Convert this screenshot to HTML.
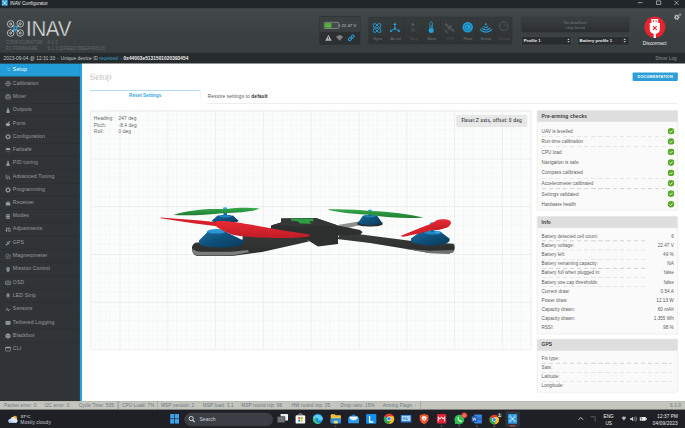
<!DOCTYPE html><html><head><meta charset="utf-8"><title>INAV Configurator</title><style>
*{box-sizing:border-box;margin:0;padding:0}
html,body{width:685px;height:428px;overflow:hidden;background:#fff}
body{font-family:'Liberation Sans',sans-serif;color:#4f4f4f}
#app{position:absolute;left:0;top:0;width:1920px;height:1200px;transform:scale(0.356771);transform-origin:0 0;overflow:hidden;background:#2b3033;font-size:12.5px}
.abs{position:absolute}
#titlebar{z-index:6;left:0;top:0;width:1920px;height:23px;background:#21262a;color:#e8e8e8;font-size:12.5px}
#titlebar .ttl{left:28px;top:1px;line-height:16px;white-space:nowrap;font-size:13.2px}
#header{left:0;top:15px;width:1920px;height:133px;background:linear-gradient(#434949 8px,#3c4243 64px,#383e3f);z-index:5}
#header>.in{position:absolute;left:0;top:8px;width:1920px;height:125px}
#logbar{left:0;top:140px;width:1920px;height:38px;padding-top:0;z-index:4;background:#262b2e;color:#c9c9c9;font-size:13.1px;letter-spacing:.3px;line-height:29px;white-space:nowrap}
#sidebar{z-index:2;left:0;top:170px;width:227px;height:962px;background:#303437}
#strip{z-index:3;left:223.5px;top:170px;width:6.5px;height:962px;background:#27a1db}
.tab{left:0;width:224px;height:37.2px;border-top:1px solid #25292a;box-shadow:inset 0 1px 0 #363a3b;color:#9b9e9e;font-size:14.4px;letter-spacing:.35px;line-height:33.800px;white-space:nowrap}
.tab span{position:absolute;left:36px;top:0}
.tab.active{background:#239dd8;color:#fff;border-top-color:#239dd8;box-shadow:none;line-height:32px}
.tab svg{position:absolute;left:14px;top:10px;width:17px;height:17px}
#content{z-index:1;left:224px;top:170px;width:1696px;height:964px;background:#fff}
#statusbar{z-index:5;left:0;top:1124px;width:1920px;height:24px;background:#c4c6be;color:#687783;font-size:13.2px;letter-spacing:.3px;line-height:23px;white-space:nowrap;border-top:1px solid #a9aba4}
#statusbar div{position:absolute;top:0}
#statusbar i{position:absolute;top:-1px;width:1.700px;height:25px;background:#7c7e79}
#taskbar{z-index:4;left:0;top:1140px;width:1920px;height:60px;background:#1e2025}
.box{background:#fafafa;border:1px solid #d9d9d9;border-radius:4px}
.box .hd{position:absolute;left:0;top:0;right:0;height:32px;background:#dedede;border-bottom:1px solid #d0d0d0;border-radius:3px 3px 0 0;color:#3a3a3a;font-weight:bold;font-size:13.8px;letter-spacing:.25px;line-height:31px;padding-left:12px}
.row{position:absolute;left:12px;right:10px;color:#5a5a5a;font-size:13px;letter-spacing:.05px;white-space:nowrap}
.row b{position:absolute;right:0;top:0;font-weight:normal}
.dash{position:absolute;left:12px;right:32px;height:1.4px;background:repeating-linear-gradient(90deg,#c3c3c3 0,#c3c3c3 12px,transparent 12px,transparent 19.900px)}
</style></head><body><div id="app">
<div id="titlebar" class="abs">
<svg class="abs" style="left:3.5px;top:-.5px" width="18" height="16.500" viewBox="0 0 18 16.500"><rect width="18" height="16.500" rx="1" fill="#2a9bd8"/><path d="M4.500 3.500l9 9M13.500 3.500l-9 9" stroke="#bfe2f5" stroke-width="1.500"/><circle cx="4.500" cy="3.800" r="2" fill="none" stroke="#d5ecf8" stroke-width="1"/><circle cx="13.500" cy="3.800" r="2" fill="none" stroke="#d5ecf8" stroke-width="1"/><circle cx="4.500" cy="12.500" r="2" fill="none" stroke="#d5ecf8" stroke-width="1"/><circle cx="13.500" cy="12.500" r="2" fill="none" stroke="#d5ecf8" stroke-width="1"/><circle cx="9" cy="8" r="2.200" fill="#eaf6fc"/></svg>
<div class="abs ttl">INAV Configurator</div>
<svg class="abs" style="left:1780px;top:0" width="140" height="23" viewBox="0 0 140 23"><path d="M8 7.5h13" stroke="#eee" stroke-width="1.6"/><path d="M60 2.5h12v10h-12z" fill="none" stroke="#eee" stroke-width="1.6"/><path d="M110 2l12 12M122 2l-12 12" stroke="#eee" stroke-width="1.6"/></svg>
</div>
<div id="header" class="abs"><div class="in">
<div class="abs" style="left:73px;top:25px;font-size:60.5px;line-height:62px;color:#e6e8e8;letter-spacing:-1px;-webkit-text-stroke:1.3px #3d4142;transform:scaleX(.95);transform-origin:0 0">INAV</div>
<div class="abs" style="left:16px;top:86.3px;font-size:12.5px;line-height:18px;color:#63686a;white-space:nowrap;letter-spacing:.2px">CONFIGURATOR<br>FC FIRMWARE</div>
<div class="abs" style="left:133px;top:86.3px;font-size:12.5px;line-height:18px;color:#63686a;white-space:nowrap;letter-spacing:.2px">6.1.0<br>6.1.1 [SPEEDYBEEF405V3]</div>
<div class="abs" style="left:895px;top:22.700px;width:115px;height:80px;background:#2c3031;border:1px solid #282b2c;border-radius:5px;box-shadow:0 1px 0 #4a4e4f"></div>
<div class="abs" style="left:896px;top:23.700px;width:113px;height:43.500px;background:#3a3f40;border-radius:4px 4px 0 0;border-bottom:1px solid #2a2d2e"></div>
<div class="abs" style="left:957px;top:40.500px;font-size:12px;color:#cfcfcf;white-space:nowrap;line-height:14px">22.47 V</div>
<div class="abs" style="left:1031.5px;top:23.700px;width:404.500px;height:78.500px;background:linear-gradient(#353a3b,#2e3233);border:1px solid #282b2c;border-radius:5px;box-shadow:0 1px 0 #4a4e4f"></div>
<div class="abs" style="left:1033.0px;top:77px;width:50.6px;text-align:center;font-size:11.5px;line-height:14px;color:#747979">Gyro</div>
<div class="abs" style="left:1083.6px;top:24.700px;width:1px;height:76.500px;background:#292c2d;box-shadow:1px 0 0 #3d4142"></div>
<div class="abs" style="left:1083.6px;top:77px;width:50.6px;text-align:center;font-size:11.5px;line-height:14px;color:#747979">Accel</div>
<div class="abs" style="left:1134.2px;top:24.700px;width:1px;height:76.500px;background:#292c2d;box-shadow:1px 0 0 #3d4142"></div>
<div class="abs" style="left:1134.2px;top:77px;width:50.6px;text-align:center;font-size:11.5px;line-height:14px;color:#4f5354">Mag</div>
<div class="abs" style="left:1184.8px;top:24.700px;width:1px;height:76.500px;background:#292c2d;box-shadow:1px 0 0 #3d4142"></div>
<div class="abs" style="left:1184.8px;top:77px;width:50.6px;text-align:center;font-size:11.5px;line-height:14px;color:#747979">Baro</div>
<div class="abs" style="left:1235.4px;top:24.700px;width:1px;height:76.500px;background:#292c2d;box-shadow:1px 0 0 #3d4142"></div>
<div class="abs" style="left:1235.4px;top:77px;width:50.6px;text-align:center;font-size:11.5px;line-height:14px;color:#4f5354">GPS</div>
<div class="abs" style="left:1286.0px;top:24.700px;width:1px;height:76.500px;background:#292c2d;box-shadow:1px 0 0 #3d4142"></div>
<div class="abs" style="left:1286.0px;top:77px;width:50.6px;text-align:center;font-size:11.5px;line-height:14px;color:#747979">Flow</div>
<div class="abs" style="left:1336.6px;top:24.700px;width:1px;height:76.500px;background:#292c2d;box-shadow:1px 0 0 #3d4142"></div>
<div class="abs" style="left:1336.6px;top:77px;width:50.6px;text-align:center;font-size:11.5px;line-height:14px;color:#747979">Sonar</div>
<div class="abs" style="left:1387.2px;top:24.700px;width:1px;height:76.500px;background:#292c2d;box-shadow:1px 0 0 #3d4142"></div>
<div class="abs" style="left:1387.2px;top:77px;width:50.6px;text-align:center;font-size:11.5px;line-height:14px;color:#4f5354">Speed</div>
<div class="abs" style="left:1461px;top:25px;width:303px;height:43px;background:linear-gradient(#3a3f40,#2b2f30);border:1px solid #262929;border-radius:4px;box-shadow:0 1px 0 #4a4e4f;color:#777b7c;font-size:11.5px;line-height:14px;text-align:center;padding-top:7px">No dataflash<br>chip found</div>
<div class="abs" style="left:1461.0px;top:78.5px;width:141px;height:25px;background:#2a2d2e;border:1px solid #5b5f60;border-radius:2px;color:#f0f0f0;font-weight:bold;font-size:12px;line-height:23px;padding-left:6px;white-space:nowrap">Profile 1</div>
<div class="abs" style="left:1617.5px;top:78.5px;width:146px;height:25px;background:#2a2d2e;border:1px solid #5b5f60;border-radius:2px;color:#f0f0f0;font-weight:bold;font-size:12px;line-height:23px;padding-left:6px;white-space:nowrap">Battery profile 1</div>
<div class="abs" style="left:1805.5px;top:23.3px;width:59.6px;height:59.6px;border-radius:50%;background:#e8222e"></div>
<div class="abs" style="left:1785px;top:91px;width:100px;text-align:center;color:#f2f2f2;font-size:13.2px;letter-spacing:.2px;line-height:16px">Disconnect</div>
</div></div>
<div id="logbar" class="abs"><span class="abs" style="left:10px;top:8px">2023-09-04 @ 12:31:33 <span style="color:#6a6e70">&ndash;</span> Unique device ID <span style="color:#37a8db">received</span> <span style="color:#6a6e70">&ndash;</span> <b style="color:#f2f2f2">0x44003e5131501020393454</b></span><span class="abs" style="right:23px;top:8px;color:#8e9293">Show Log</span></div>
<div id="sidebar" class="abs">
<div class="abs tab active" style="top:8.0px"><svg viewBox="0 0 15 15" fill="currentColor" stroke="none"><path d="M5 2.200h8v1.300H5zM7 6.800h6v1.300H7z" opacity=".6"/></svg><span>Setup</span></div>
<div class="abs tab" style="top:45.2px"><svg viewBox="0 0 15 15" fill="currentColor" stroke="none"><circle cx="7.500" cy="7.500" r="5.600" fill="none" stroke="currentColor" stroke-width="1.500"/><path d="M7.500 1v13M1 7.500h13" stroke="currentColor" stroke-width="1.300"/></svg><span>Calibration</span></div>
<div class="abs tab" style="top:82.4px"><svg viewBox="0 0 15 15" fill="currentColor" stroke="none"><rect x="2" y="3" width="11" height="10" rx="1.500" fill="none" stroke="currentColor" stroke-width="1.600"/><path d="M4 1.500h7v2H4zM2 7.500h11v1.400H2z"/></svg><span>Mixer</span></div>
<div class="abs tab" style="top:119.6px"><svg viewBox="0 0 15 15" fill="currentColor" stroke="none"><path d="M6 1h3v4l2 2v7H4V7l2-2z"/></svg><span>Outputs</span></div>
<div class="abs tab" style="top:156.8px"><svg viewBox="0 0 15 15" fill="currentColor" stroke="none"><path d="M2 9l3-4 2 1.500 3-5 2 1-2 5 3 1.500-2 4.500H3z"/></svg><span>Ports</span></div>
<div class="abs tab" style="top:194.0px"><svg viewBox="0 0 15 15" fill="currentColor" stroke="none"><circle cx="7.500" cy="7.500" r="4.300" fill="none" stroke="currentColor" stroke-width="2.600"/><circle cx="7.500" cy="7.500" r="6.200" fill="none" stroke="currentColor" stroke-width="1.800" stroke-dasharray="2.300 2.570"/></svg><span>Configuration</span></div>
<div class="abs tab" style="top:231.2px"><svg viewBox="0 0 15 15" fill="currentColor" stroke="none"><path d="M1.500 7.500a6 5.500 0 0 1 12 0z"/><path d="M2 7.500l5.500 6 5.500-6" fill="none" stroke="currentColor" stroke-width="1.100"/></svg><span>Failsafe</span></div>
<div class="abs tab" style="top:268.4px"><svg viewBox="0 0 15 15" fill="currentColor" stroke="none"><path d="M6 1.500h3v5l4 7H2l4-7z"/></svg><span>PID tuning</span></div>
<div class="abs tab" style="top:305.6px"><svg viewBox="0 0 15 15" fill="currentColor" stroke="none"><path d="M2 2h1.600v11H2zM6 5h4v1.500H6zM6 8.500h1.600V14H6zM10.500 7h1.600v7h-1.600zM9 10.500h4.500V12H9z"/></svg><span>Advanced Tuning</span></div>
<div class="abs tab" style="top:342.8px"><svg viewBox="0 0 15 15" fill="currentColor" stroke="none"><circle cx="7.500" cy="7.500" r="4.300" fill="none" stroke="currentColor" stroke-width="2.600"/><circle cx="7.500" cy="7.500" r="6.200" fill="none" stroke="currentColor" stroke-width="1.800" stroke-dasharray="2.300 2.570"/></svg><span>Programming</span></div>
<div class="abs tab" style="top:380.0px"><svg viewBox="0 0 15 15" fill="currentColor" stroke="none"><path d="M2 6h11v7.500H2zM5 3.500h5V6H8.800V4.700H6.200V6H5z"/></svg><span>Receiver</span></div>
<div class="abs tab" style="top:417.2px"><svg viewBox="0 0 15 15" fill="currentColor" stroke="none"><path d="M3 2h9v3H3zM3 6h9v3H3zM3 10h9v3.500H3z"/><path d="M1.500 4l3 3-3 3z" opacity=".7"/></svg><span>Modes</span></div>
<div class="abs tab" style="top:454.4px"><svg viewBox="0 0 15 15" fill="currentColor" stroke="none"><path d="M2.500 1.500h1.500v12H2.500zM7 1.500h1.500v12H7zM11.500 1.500H13v12h-1.500zM1.500 8.500H5v2.500H1.500zM6 3.500h3.500V6H6zM10.500 9H14v2.500h-3.500z"/></svg><span>Adjustments</span></div>
<div class="abs tab" style="top:491.6px"><svg viewBox="0 0 15 15" fill="currentColor" stroke="none"><g transform="rotate(-45 7.500 7.500)"><rect x="5.800" y="4.500" width="3.400" height="6"/><rect x=".5" y="6" width="4.500" height="3"/><rect x="10" y="6" width="4.500" height="3"/></g><path d="M2 11a4 4 0 0 0 3.500 3" fill="none" stroke="currentColor" stroke-width="1.200"/></svg><span>GPS</span></div>
<div class="abs tab" style="top:528.8px"><svg viewBox="0 0 15 15" fill="currentColor" stroke="none"><circle cx="7.500" cy="7.500" r="5.800" fill="none" stroke="currentColor" stroke-width="1.300"/><path d="M9.800 4.500l-1.300 4-3.300 2 1.300-4z"/></svg><span>Magnetometer</span></div>
<div class="abs tab" style="top:566.0px"><svg viewBox="0 0 15 15" fill="currentColor" stroke="none"><path d="M7.500 14.500C5 11 3 8.700 3 6a4.500 4.500 0 0 1 9 0c0 2.700-2 5-4.500 8.500z"/><circle cx="7.500" cy="6" r="1.700" fill="#2f3334"/></svg><span>Mission Control</span></div>
<div class="abs tab" style="top:603.2px"><svg viewBox="0 0 15 15" fill="currentColor" stroke="none"><rect x="1.500" y="3.500" width="12" height="8.500" rx="1" fill="none" stroke="currentColor" stroke-width="1.600"/><path d="M4 6h1.600v3.500H4zM6.700 6h1.600v3.500H6.700zM9.400 6H11v3.500H9.400z"/></svg><span>OSD</span></div>
<div class="abs tab" style="top:640.4px"><svg viewBox="0 0 15 15" fill="currentColor" stroke="none"><path d="M5 1.500h5l1 4.500H4zM3 6.500h9V9H3zM6.800 9h1.400v5H6.800z"/></svg><span>LED Strip</span></div>
<div class="abs tab" style="top:677.6px"><svg viewBox="0 0 15 15" fill="currentColor" stroke="none"><path d="M1 8.500h3.500l1.500-5 2 8.500 1.500-4.500h4" fill="none" stroke="currentColor" stroke-width="1.300"/></svg><span>Sensors</span></div>
<div class="abs tab" style="top:714.8px"><svg viewBox="0 0 15 15" fill="currentColor" stroke="none"><rect x="1.500" y="3.500" width="12" height="9" rx="1"/><path d="M3 5.500h9v1H3z" fill="#2f3334"/></svg><span>Tethered Logging</span></div>
<div class="abs tab" style="top:752.0px"><svg viewBox="0 0 15 15" fill="currentColor" stroke="none"><path d="M7.500 1L13.500 4v7l-6 3.500-6-3.500V4z"/><path d="M7.500 7.500V14M2 4.300l5.500 3.200L13 4.300" stroke="#2f3334" stroke-width=".9" fill="none"/></svg><span>Blackbox</span></div>
<div class="abs tab" style="top:789.2px"><svg viewBox="0 0 15 15" fill="currentColor" stroke="none"><rect x="1.500" y="2.500" width="12" height="10" rx="1" fill="none" stroke="currentColor" stroke-width="1.500"/><path d="M1.500 2.500h12v2.600h-12z"/></svg><span>CLI</span></div>
</div><div id="strip" class="abs"></div>
<div id="content" class="abs">
<div class="abs" style="left:27px;top:30px;font-size:23.5px;line-height:30px;color:#8c8c8c;-webkit-text-stroke:.9px #fff">Setup</div>
<div class="abs" style="left:1549px;top:32.5px;width:127px;height:24px;background:#2e9fd6;border-radius:3px;color:#fff;font-weight:bold;font-size:10.6px;line-height:24px;text-align:center;letter-spacing:.5px">DOCUMENTATION</div>
<div class="abs" style="left:27.5px;top:83px;width:311px;height:28px;border:1px solid rgba(55,168,219,.2);border-top:2px solid #45aee0;border-radius:4px;color:#37a8db;font-weight:bold;font-size:13px;line-height:25px;text-align:center">Reset Settings</div>
<div class="abs" style="left:358px;top:92px;font-size:13.4px;letter-spacing:.35px;line-height:16px;color:#555;white-space:nowrap">Restore settings to <b style="color:#333">default</b></div>
<div class="abs" style="left:356px;top:119px;width:1320px;height:1px;background:#cfcfcf"></div>
<div class="abs" style="left:29px;top:139px;width:1237px;height:672px;border:1px solid #dcdcdc;border-radius:4px;background-color:#fbfcfc"></div>
<div class="abs" style="left:39px;top:154px;font-size:13.4px;letter-spacing:.3px;line-height:18.6px;color:#4a4a4a;white-space:nowrap">Heading:<br>Pitch:<br>Roll:</div>
<div class="abs" style="left:108px;top:154px;font-size:13.4px;letter-spacing:.3px;line-height:18.6px;color:#4a4a4a;white-space:nowrap">247 deg<br>-8.4 deg<br>0 deg</div>
<div class="abs" style="left:1055.5px;top:152.5px;width:197px;height:32px;background:#e6e6e6;border:1px solid #c8c8c8;border-radius:3px;color:#262626;font-weight:bold;font-size:13.3px;letter-spacing:.2px;line-height:30px;text-align:center;white-space:nowrap">Reset Z axis, offset: 0 deg</div>
<div class="abs box" style="left:1281px;top:139.0px;width:394.5px;height:281.0px"><div class="hd">Pre-arming checks</div>
<div class="row" style="top:50.0px;line-height:16px">UAV is levelled</div>
<svg class="abs" style="right:8.5px;top:47.6px" width="19.5" height="19.5" viewBox="0 0 18 18"><circle cx="9" cy="9" r="8.6" fill="#59aa29"/><path d="M5 9.3l2.8 2.8 5.2-5.4" fill="none" stroke="#fff" stroke-width="2.2"/></svg>
<div class="dash" style="top:71.8px;right:32px"></div>
<div class="row" style="top:79.3px;line-height:16px">Run-time calibration</div>
<svg class="abs" style="right:8.5px;top:76.9px" width="19.5" height="19.5" viewBox="0 0 18 18"><circle cx="9" cy="9" r="8.6" fill="#59aa29"/><path d="M5 9.3l2.8 2.8 5.2-5.4" fill="none" stroke="#fff" stroke-width="2.2"/></svg>
<div class="dash" style="top:101.1px;right:32px"></div>
<div class="row" style="top:108.6px;line-height:16px">CPU load</div>
<svg class="abs" style="right:8.5px;top:106.2px" width="19.5" height="19.5" viewBox="0 0 18 18"><circle cx="9" cy="9" r="8.6" fill="#59aa29"/><path d="M5 9.3l2.8 2.8 5.2-5.4" fill="none" stroke="#fff" stroke-width="2.2"/></svg>
<div class="row" style="top:137.9px;line-height:16px">Navigation is safe</div>
<svg class="abs" style="right:8.5px;top:135.5px" width="19.5" height="19.5" viewBox="0 0 18 18"><circle cx="9" cy="9" r="8.6" fill="#59aa29"/><path d="M5 9.3l2.8 2.8 5.2-5.4" fill="none" stroke="#fff" stroke-width="2.2"/></svg>
<div class="row" style="top:167.2px;line-height:16px">Compass calibrated</div>
<svg class="abs" style="right:8.5px;top:164.8px" width="19.5" height="19.5" viewBox="0 0 18 18"><circle cx="9" cy="9" r="8.6" fill="#59aa29"/><path d="M5 9.3l2.8 2.8 5.2-5.4" fill="none" stroke="#fff" stroke-width="2.2"/></svg>
<div class="dash" style="top:189.0px;right:32px"></div>
<div class="row" style="top:196.5px;line-height:16px">Accelerometer calibrated</div>
<svg class="abs" style="right:8.5px;top:194.1px" width="19.5" height="19.5" viewBox="0 0 18 18"><circle cx="9" cy="9" r="8.6" fill="#59aa29"/><path d="M5 9.3l2.8 2.8 5.2-5.4" fill="none" stroke="#fff" stroke-width="2.2"/></svg>
<div class="dash" style="top:218.3px;right:32px"></div>
<div class="row" style="top:225.8px;line-height:16px">Settings validated</div>
<svg class="abs" style="right:8.5px;top:223.4px" width="19.5" height="19.5" viewBox="0 0 18 18"><circle cx="9" cy="9" r="8.6" fill="#59aa29"/><path d="M5 9.3l2.8 2.8 5.2-5.4" fill="none" stroke="#fff" stroke-width="2.2"/></svg>
<div class="row" style="top:255.1px;line-height:16px">Hardware health</div>
<svg class="abs" style="right:8.5px;top:252.7px" width="19.5" height="19.5" viewBox="0 0 18 18"><circle cx="9" cy="9" r="8.6" fill="#59aa29"/><path d="M5 9.3l2.8 2.8 5.2-5.4" fill="none" stroke="#fff" stroke-width="2.2"/></svg>
</div>
<div class="abs box" style="left:1281px;top:436.0px;width:394.5px;height:330.7px"><div class="hd">Info</div>
<div class="row" style="top:47.4px;line-height:16px">Battery detected cell count:<b>6</b></div>
<div class="dash" style="top:67.3px;right:86px"></div>
<div class="row" style="top:73.0px;line-height:16px">Battery voltage:<b>22.47 V</b></div>
<div class="dash" style="top:93.0px;right:86px"></div>
<div class="row" style="top:98.7px;line-height:16px">Battery left:<b>49 %</b></div>
<div class="dash" style="top:118.6px;right:86px"></div>
<div class="row" style="top:124.4px;line-height:16px">Battery remaining capacity:<b>NA</b></div>
<div class="dash" style="top:144.3px;right:86px"></div>
<div class="row" style="top:150.0px;line-height:16px">Battery full when plugged in:<b>false</b></div>
<div class="dash" style="top:169.9px;right:86px"></div>
<div class="row" style="top:175.7px;line-height:16px">Battery use cap thresholds:<b>false</b></div>
<div class="dash" style="top:195.6px;right:86px"></div>
<div class="row" style="top:201.3px;line-height:16px">Current draw:<b>0.54 A</b></div>
<div class="row" style="top:226.9px;line-height:16px">Power draw:<b>12.13 W</b></div>
<div class="row" style="top:252.6px;line-height:16px">Capacity drawn:<b>60 mAh</b></div>
<div class="row" style="top:278.2px;line-height:16px">Capacity drawn:<b>1.355 Wh</b></div>
<div class="row" style="top:303.9px;line-height:16px">RSSI:<b>98 %</b></div>
</div>
<div class="abs box" style="left:1281px;top:780.0px;width:394.5px;height:150.0px"><div class="hd">GPS</div>
<div class="row" style="top:46.7px;line-height:16px">Fix type:</div>
<div class="dash" style="top:66.4px;right:17px"></div>
<div class="row" style="top:71.9px;line-height:16px">Sats:</div>
<div class="dash" style="top:91.6px;right:17px"></div>
<div class="row" style="top:97.1px;line-height:16px">Latitude:</div>
<div class="dash" style="top:116.8px;right:17px"></div>
<div class="row" style="top:122.3px;line-height:16px">Longitude:</div>
</div>
</div>
<div id="statusbar" class="abs">
<div style="left:11.5px">Packet error: 0</div>
<div style="left:124.7px">I2C error: 0</div>
<div style="left:220.6px">Cycle Time: 505</div>
<div style="left:342.0px">CPU Load: 7%</div>
<div style="left:451.3px">MSP version: 2</div>
<div style="left:568.4px">MSP load: 3.1</div>
<div style="left:676.1px">MSP round trip: 96</div>
<div style="left:817.1px">HW round trip: 35</div>
<div style="left:954.4px">Drop ratio: 15%</div>
<div style="left:1072.7px">Arming Flags: -</div>
<i style="left:330.2px"></i>
<i style="left:440.6px"></i>
<i style="left:1178.6px"></i>
<div style="right:11px">6.1.0</div>
</div>
<div id="taskbar" class="abs">
<div class="abs" style="left:57.500px;top:21px;color:#fff;font-size:12.300px;letter-spacing:0;line-height:14px;white-space:nowrap">37°C</div><div class="abs" style="left:57px;top:38px;color:#c9cdd2;font-size:13.5px;letter-spacing:.3px;line-height:14px;white-space:nowrap">Mostly cloudy</div>
<div class="abs" style="left:517px;top:16.500px;width:248px;height:37px;border-radius:19px;background:#3b3f45;border:1px solid #484c52"></div>
<div class="abs" style="left:559px;top:28px;color:#d4d6d9;font-size:14px;letter-spacing:.2px;line-height:15px">Search</div>
<div class="abs" style="left:1686px;top:19px;width:40px;text-align:center;color:#f2f2f2;font-size:13px;line-height:17.5px">ENG<br>US</div>
<div class="abs" style="right:20px;top:19px;text-align:right;color:#f2f2f2;font-size:13px;letter-spacing:.25px;line-height:17.5px;white-space:nowrap">12:37 PM</div>
<div class="abs" style="right:20px;top:36.5px;text-align:right;color:#f2f2f2;font-size:13px;letter-spacing:.55px;line-height:17.5px;white-space:nowrap">04/09/2023</div>
</div>
<svg class="abs" style="left:0;top:0;z-index:9" width="1920" height="1200" viewBox="0 0 685 428.125">
<!-- logo drone -->
<g fill="none" stroke="#d4d8d8" stroke-width="0.75">
<path d="M12.2 25.5L18.8 31.5M18.8 25.5L12.2 31.5" stroke-width="1.1"/>
<circle cx="10.7" cy="24" r="3.3"/><circle cx="20.2" cy="23.8" r="3.3"/><circle cx="10.7" cy="33" r="3.3"/><circle cx="20.2" cy="33" r="3.3"/>
<circle cx="10.7" cy="24" r="1"/><circle cx="20.2" cy="23.8" r="1"/><circle cx="10.7" cy="33" r="1"/><circle cx="20.2" cy="33" r="1"/>
</g>
<path d="M15.45 32.2C14 30.2 13 29.2 13 27.9a2.45 2.45 0 0 1 4.9 0c0 1.3-1 2.3-2.45 4.3z" fill="#2fa3dc" stroke="#3d4142" stroke-width=".5"/>
<circle cx="15.45" cy="27.9" r="0.9" fill="#3d4142"/>

<!-- battery icon -->
<rect x="324.300" y="22.300" width="14.500" height="6.200" rx="0.800" fill="#464a4b" stroke="#979b9b" stroke-width="0.700"/>
<rect x="325.100" y="23.100" width="6.300" height="4.600" fill="#52b53a"/>
<rect x="339.200" y="24.100" width="0.800" height="2.600" fill="#979b9b"/>
<!-- status icons -->
<path d="M328.500 34.800l3.200 6h-6.400z" fill="#b4b7b7"/>
<path d="M328.500 36.800v2M328.500 39.500v.600" stroke="#303435" stroke-width=".7"/>
<path d="M336.100 36.800c2-2.200 5.100-2.200 7.100 0l-3.550 4z" fill="#7d8182"/>
<g fill="none" stroke="#2b9fd9" stroke-width="1"><rect x="348.2" y="37.9" width="3.6" height="2.3" rx="1.1" transform="rotate(-45 350 39)"/><rect x="350.7" y="35.5" width="3.6" height="2.3" rx="1.1" transform="rotate(-45 352.5 36.6)"/></g>

<!-- sensors -->
<g fill="none" stroke="#25a2dc" stroke-width="0.85">
<ellipse cx="377.1" cy="28" rx="5.400" ry="2.100" transform="rotate(52 377.100 28)"/><ellipse cx="377.100" cy="28" rx="5.400" ry="2.100" transform="rotate(-52 377.100 28)"/>
</g>
<circle cx="377.100" cy="28" r=".9" fill="#25a2dc"/>
<g stroke="#25a2dc" stroke-width="0.9" fill="#25a2dc">
<path d="M394.900 24.500v4.100l-3.800 2.300M394.900 28.600l3.800 2.300" fill="none"/>
<path d="M394.900 22.500l1.700 2.500h-3.400z" stroke="none"/>
<path d="M389.700 31.800l1-2.700 1.600 2.600z" stroke="none"/><path d="M400.100 31.800l-1-2.700-1.600 2.600z" stroke="none"/>
<circle cx="394.900" cy="28.600" r="1.100" stroke="none"/>
</g>
<path d="M412.900 22.400l1.800 3h-3.600z" fill="#5a5e5f"/>
<text x="412.900" y="32.400" font-family="'Liberation Sans',sans-serif" font-size="5.800" text-anchor="middle" fill="#5a5e5f">N</text>
<rect x="429.900" y="22" width="2.600" height="8" rx="1.300" fill="#343839" stroke="#25a2dc" stroke-width=".7"/><circle cx="431.200" cy="30.500" r="2.500" fill="#25a2dc"/>
<path d="M431.200 25v5" stroke="#25a2dc" stroke-width=".8"/>
<g fill="#505455" transform="rotate(40 449.600 27.500)"><rect x="448.100" y="25.300" width="3" height="4.400"/><rect x="443.400" y="26.400" width="4.200" height="2.200"/><rect x="451.600" y="26.400" width="4.200" height="2.200"/></g>
<path d="M444.800 29.600a3.800 3.800 0 0 0 3.800 3.400" fill="none" stroke="#505455" stroke-width=".8"/><circle cx="446.800" cy="31.200" r=".8" fill="#505455"/>
<circle cx="467.700" cy="27.300" r="5.200" fill="#1f9fd9"/><circle cx="467.700" cy="27.300" r="3.300" fill="none" stroke="#1670a0" stroke-width=".9"/><circle cx="467.700" cy="27.300" r="1.300" fill="#1670a0"/><circle cx="468.300" cy="26.800" r=".6" fill="#9fd8f2"/>
<g fill="none" stroke="#25a2dc" stroke-width="1.050"><path d="M483.600 26.400a3 3 0 0 0 4.600 0"/><path d="M481.700 27.900a5.400 5.400 0 0 0 8.400 0"/><path d="M479.900 29.300a7.800 7.800 0 0 0 12 0"/></g>
<circle cx="485.900" cy="24.300" r="1" fill="#25a2dc"/>
<circle cx="503.700" cy="26.300" r="4.300" fill="none" stroke="#505455" stroke-width="1"/><path d="M503.700 26.600l2.200-2.600" stroke="#505455" stroke-width=".9"/>

<!-- select arrows -->
<g fill="#c9cccc"><path d="M567.3 39.9l1.2-1.5 1.2 1.5zM567.3 41.1l1.2 1.5 1.2-1.5z"/><path d="M623.5 39.9l1.2-1.5 1.2 1.5zM623.5 41.1l1.2 1.5 1.2-1.5z"/></g>

<!-- usb / disconnect -->
<g transform="translate(.4 .9)"><g fill="#fff"><rect x="651" y="18.2" width="6.8" height="4.2" rx=".5"/><path d="M649.3 22.2h10.2v6.2c0 2.6-2 4.3-4 4.6v4.2h-2.2V33c-2-.3-4-2-4-4.6z"/></g>
<rect x="652.4" y="19.4" width="1.3" height="1.4" fill="#e8222e"/><rect x="655.1" y="19.4" width="1.3" height="1.4" fill="#e8222e"/>
<path d="M652.5 25.2l3.8 3.8M656.3 25.2l-3.8 3.8" stroke="#e8222e" stroke-width="1.1"/></g>
<!-- gear -->
<circle cx="676.8" cy="17.2" r="1.9" fill="none" stroke="#cfd2d2" stroke-width="1.3" stroke-dasharray="1 .5"/><circle cx="676.8" cy="17.2" r="1.5" fill="none" stroke="#cfd2d2" stroke-width=".8"/>
<circle cx="680" cy="14.6" r=".9" fill="none" stroke="#cfd2d2" stroke-width=".5"/>
<!-- ================= grid ================= -->
<defs>
<pattern id="grid" x="119.5" y="110.6" width="47.8" height="47.8" patternUnits="userSpaceOnUse">
<path d="M4.78 0V47.8M14.34 0V47.8M23.9 0V47.8M33.46 0V47.8M43.02 0V47.8M0 4.78H47.8M0 14.34H47.8M0 23.9H47.8M0 33.46H47.8M0 43.02H47.8" stroke="#f3f5f5" stroke-width=".3" fill="none"/>
<path d="M9.56 0V47.8M19.12 0V47.8M28.68 0V47.8M38.24 0V47.8M0 9.56H47.8M0 19.12H47.8M0 28.68H47.8M0 38.24H47.8" stroke="#ecefef" stroke-width=".45" fill="none"/>
<path d="M0 0V47.8M0 0H47.8" stroke="#d7dcdc" stroke-width=".8" fill="none"/>
</pattern>
</defs>
<rect x="90.700" y="110.700" width="440.400" height="238.900" fill="url(#grid)"/>
<!-- ================= drone ================= -->
<defs>
<linearGradient id="mtr" x1="0" y1="0" x2="1" y2="1"><stop offset="0" stop-color="#1a6fa2"/><stop offset=".5" stop-color="#0e507a"/><stop offset="1" stop-color="#093a5a"/></linearGradient>
<linearGradient id="redb" x1="0" y1="0" x2="0" y2="1"><stop offset="0" stop-color="#ea2a33"/><stop offset="1" stop-color="#c01c26"/></linearGradient>
<linearGradient id="grn" x1="0" y1="0" x2="0" y2="1"><stop offset="0" stop-color="#35a84a"/><stop offset="1" stop-color="#1f7f33"/></linearGradient>
<linearGradient id="arm" x1="0" y1="0" x2="0" y2="1"><stop offset="0" stop-color="#3b3d3d"/><stop offset="1" stop-color="#2a2c2c"/></linearGradient>
</defs>
<!-- back arms -->
<path d="M338 225L360 221.3 363 224.2 344 229z" fill="#8d8f8f"/>
<!-- back-left motor -->
<path d="M216.5 216.5c0-2 17.5-2 17.5 0l4.6 4.2c0 3.2-26.8 3.2-26.8 0z" fill="url(#mtr)"/>
<ellipse cx="225.2" cy="216.3" rx="6" ry="1.3" fill="#2183bd"/>
<rect x="223.4" y="208" width="3.6" height="7" fill="#1466a0"/><ellipse cx="225.2" cy="208.3" rx="2.2" ry="1" fill="#39a9e6"/>
<!-- back-right motor -->
<path d="M357.5 224.2c0 3 25 3 25 0v-1.600c0-1-25-1-25 0z" fill="#2b2d2d"/><path d="M362.5 216.3c0-1.8 15-1.8 15 0l4.3 6c0 3.6-23.4 3.6-23.4 0z" fill="url(#mtr)"/>
<ellipse cx="370" cy="216" rx="5.2" ry="1.2" fill="#2183bd"/>
<rect x="368.4" y="210.2" width="3.2" height="5.8" fill="#1466a0"/><ellipse cx="370" cy="210.4" rx="2" ry=".9" fill="#39a9e6"/>
<!-- green props -->
<path d="M173.4 214.9C188 209.8 210 208.3 225 209.2 240 207.2 252 207.4 259.8 208.8 251 211.8 238 212.8 225 212.9 205 215 188 216 173.4 214.9z" fill="url(#grn)"/>
<path d="M328.5 209.3C345 208.8 358 209.8 370 210.9 390 211.4 410 214.4 423.8 217.5 408 218.8 388 217.8 370 214.8 352 214 338 212.2 328.5 210z" fill="url(#grn)"/>
<!-- front arms + body -->
<path d="M192 248c0-3.5 2.5-5.5 6-5.500h44L243 235 271.500 228 300 233 309 241.500 262 252 232 256H199c-4.500 0-7-2.500-7-8z" fill="url(#arm)"/>
<path d="M192.500 248.500c2 2.500 5 3.200 9 3.200h30L248 250l1 2.300-17 3.200h-32.500c-5 0-7.500-2.500-7-7z" fill="#7b7d7d"/>
<path d="M337 239L342 232 412 241 453.500 243.800c2 2.500 1.500 6.200-.5 8.200L449 253.600 430 253 405 248.800 370 243z" fill="url(#arm)"/>
<path d="M405 248.800L430 250.800 452.500 250c1.500 0 2 1 .5 2.500L449 253.800 430 253.200z" fill="#6f7171"/>
<path d="M281 218.500L316 218 338 225.500 360 230 362.500 232 360.500 234.700 338 235.800 338 244 318 246.600 307.400 240 271 228 271 225.500 281 222.500z" fill="#2e3030"/>
<path d="M281 218.500L316 218 338 225.500 300 226.500 271 225.500 281 222.500z" fill="#353737"/>
<path d="M291 218.600H313.500V221.300H309L311.500 223.800 300 223.500 298 221.500 291 220.600z" fill="#2f9d41"/>
<path d="M300 217.700l14 0 0 1.200 -14 0z" fill="#2f9d41" opacity="0"/>
<!-- front-left motor -->
<path d="M207 232.500c0-3.200 20-3.200 20 0L243.400 240.500v2.200c0 6.500-44.400 6.500-44.400 0v-2.200z" fill="url(#mtr)"/>
<ellipse cx="216.500" cy="231.300" rx="9.400" ry="2.300" fill="#2a96d6"/>
<!-- front-right motor -->
<path d="M418.500 233c0-2.600 23.500-2.600 23.500 0l7.500 5.400v2c0 6.300-38.500 6.300-38.500 0v-2z" fill="url(#mtr)"/>
<ellipse cx="433" cy="232.600" rx="9" ry="2" fill="#2387c4"/>
<rect x="430.300" y="223" width="3.600" height="9" fill="#1466a0"/><ellipse cx="432.100" cy="223.300" rx="2.300" ry="1.100" fill="#39a9e6"/>
<ellipse cx="437.500" cy="232.300" rx="2.500" ry="1" fill="#39a9e6"/>
<!-- red props -->
<path d="M160.500 217.400L200 220.400 217 222.300 217 226.200 195 223.600 160.500 218.300z" fill="#d8202a"/>
<path d="M216 221.300C226 219.800 243.400 223.200 278.500 229.800L309.500 234.500 309.500 236.400C295 238.200 275 238.300 262 237.600 248 236.900 238 236.600 230.500 234 224 231.500 218.500 228.500 216 226z" fill="url(#redb)"/>
<path d="M400.400 236L420 228 430.500 224 434 229.500 420 233.200 403.500 236.800z" fill="#d8202a"/>
<path d="M430.500 224L436.500 220.400C441 219 447.500 218.800 450.400 221 451.800 223.500 450 226.200 446.500 227.800L438.500 230 433.500 230z" fill="url(#redb)"/>
<!-- ================= taskbar ================= -->
<g transform="translate(13.2 420.2) scale(.88) translate(-12.6 -420)"><circle cx="14.6" cy="417.3" r="2.4" fill="#f6a723"/>
<path d="M9.2 423.2a2.300 2.300 0 0 1 .3-4.600 3 3 0 0 1 5.600-.5 2.600 2.600 0 0 1 .6 5.100z" fill="#dce7f6"/>
<path d="M9.200 423.200a2.300 2.300 0 0 1-.9-4.200c1 2.200 4 3.400 8.200 3.200a2.600 2.600 0 0 1-.8 1z" fill="#a9c4ea"/></g>
<g fill="#3ba3ec"><rect x="170.2" y="414" width="4.100" height="4.500"/><rect x="174.900" y="414" width="4.100" height="4.500"/><rect x="170.200" y="419.100" width="4.100" height="4.500"/><rect x="174.900" y="419.100" width="4.100" height="4.500"/></g>
<circle cx="191.200" cy="418.500" r="2.100" fill="none" stroke="#ececec" stroke-width=".85"/><path d="M192.700 420.100l1.900 2" stroke="#ececec" stroke-width="1"/>
<rect x="280.600" y="414" width="7.400" height="6.500" rx=".6" fill="#eef0f2"/><rect x="277.200" y="416.400" width="7.800" height="6.400" rx=".6" fill="#6d7178" stroke="#1c1f23" stroke-width=".5"/>
<path d="M298.500 415.300c0-2 3.800-2 3.800 0" fill="none" stroke="#e8e8e8" stroke-width=".7"/>
<rect x="295.600" y="415.200" width="9.600" height="8.400" rx="1.200" fill="#f4f4f4"/>
<rect x="298.200" y="417.200" width="1.900" height="1.900" fill="#f25022"/><rect x="300.700" y="417.200" width="1.900" height="1.900" fill="#7fba00"/><rect x="298.200" y="419.700" width="1.900" height="1.900" fill="#00a4ef"/><rect x="300.700" y="419.700" width="1.900" height="1.900" fill="#ffb900"/>
<circle cx="317.800" cy="418.800" r="5.100" fill="#1c86d8"/>
<path d="M312.800 419.800a5.100 5.100 0 0 0 8.500 2.700c-2.500 1-5.300-.3-5.300-3 0-1.600 1.300-2.700 2.700-2.700-2.800-1-5.600.4-5.900 3z" fill="#39c481"/>
<path d="M313 417.500c1.500-3.500 7.500-4.200 9.600.3.500 1.500-.2 2.800-1.800 2.800h-2.600c.8-1.600-.5-3-2.300-2.700-1.400.2-2.400.9-2.900-.4z" fill="#5fd0f5"/>
<path d="M330.700 415.200c0-.6.400-1 1-1h2.900l1.100 1.100h4.200c.6 0 1 .4 1 1v5.900h-10.200z" fill="#f5c342"/>
<path d="M330.700 418.200h10.200v4.200c0 .6-.4 1-1 1h-8.200c-.6 0-1-.4-1-1z" fill="#2a8fdc"/><rect x="333.800" y="420.800" width="4" height="2.600" fill="#f7d46b"/>
<path d="M348.400 417.600l5.200-3.300 5.200 3.300v5.500h-10.400z" fill="#1b7fd6"/><path d="M349.500 416.600h8.200v4h-8.200z" fill="#e9f3fc"/><path d="M348.400 417.700l5.200 3.400 5.200-3.400v5.500h-10.400z" fill="#2d9bf0"/>
<rect x="366.100" y="414" width="10.200" height="9.800" rx=".8" fill="#1590ef"/><path d="M369.600 416v6h3.800" fill="none" stroke="#fff" stroke-width="1.300"/>
<g><circle cx="389" cy="418.800" r="5.200" fill="#e33b2e"/><path d="M389 418.800L384.500 416.200A5.200 5.200 0 0 0 389 424l2.300-3.900z" fill="#2da94f"/><path d="M389 418.800l2.300 1.300L389 424a5.200 5.200 0 0 0 4.500-7.800H389z" fill="#fbc116"/><circle cx="389" cy="418.800" r="2.400" fill="#fff"/><circle cx="389" cy="418.800" r="1.800" fill="#3f83f1"/></g>
<rect x="400.800" y="414.900" width="10.500" height="7.700" rx=".6" fill="#2c7ed2"/><rect x="401.700" y="415.800" width="8.700" height="5.300" fill="#a9d2f3"/><path d="M403 419.600l1.200-2.400 1.200 2.400M406.500 417.200v2.400h1.400" fill="none" stroke="#2561a8" stroke-width=".6"/>
<path d="M424.100 413.800l1.800.9 1.700-.2 1.100 1.700-.4 1.500.3 1.200-1.200 3-3.300 2.500-3.300-2.500-1.200-3 .3-1.200-.4-1.500 1.100-1.700 1.700.2z" fill="#f1562b"/><path d="M424.100 416.200l1.900.4.600 1.500-1 2-1.500.9-1.500-.9-1-2 .6-1.500z" fill="#fff"/><path d="M424.100 418l.9 1.300-.9.800-.9-.8z" fill="#f1562b"/>
<rect x="436.900" y="414" width="9.300" height="9.500" rx=".8" fill="#df2537"/><path d="M438.300 421.400v-4.600l1.600 2.300 1.600-2.300 1.600 2.300 1.600-2.300v4.600" fill="none" stroke="#fff" stroke-width=".9"/>
<circle cx="459.300" cy="419.600" r="4.900" fill="#2ec04f"/><path d="M454.700 424.300l.8-2.600 1.800 1.700z" fill="#2ec04f"/><path d="M457.600 417.300c-.6 2 1.500 4.600 3.700 4.700l.8-.9-1.200-.8-.6.400c-.8-.3-1.500-1.100-1.700-1.900l.5-.5-.6-1.300z" fill="#fff"/>
<circle cx="464.300" cy="415.300" r="2.800" fill="#e7483c"/><path d="M463.300 415.600a1 .9 0 1 1 2 0 1 .9 0 1 1-2 0" fill="none" stroke="#f8c9c4" stroke-width=".5"/>
<rect x="474.200" y="414.500" width="7.700" height="9" rx=".7" fill="#3b86e0"/><rect x="474.200" y="417.500" width="7.700" height="3" fill="#2a6ccc"/><rect x="471.600" y="416.300" width="5.600" height="5.600" rx=".6" fill="#1b57b4"/><path d="M472.600 417.700l.8 2.800.9-2.800.9 2.800.8-2.800" fill="none" stroke="#fff" stroke-width=".55"/>
<g><circle cx="494.300" cy="419.600" r="4.900" fill="#e33b2e"/><path d="M494.300 419.600L490.100 417.100A4.900 4.900 0 0 0 494.300 424.500l2.100-3.700z" fill="#2da94f"/><path d="M494.300 419.600l2.100 1.200-2.100 3.700a4.900 4.900 0 0 0 4.200-7.400h-4.200z" fill="#fbc116"/><circle cx="494.300" cy="419.600" r="2.200" fill="#fff"/><circle cx="494.300" cy="419.600" r="1.650" fill="#3f83f1"/></g>
<circle cx="499.600" cy="415.200" r="2.600" fill="#3a3d42"/><circle cx="499.600" cy="414.500" r=".9" fill="#b9bcc0"/><path d="M497.900 416.900a1.700 1.500 0 0 1 3.400 0z" fill="#b9bcc0"/>
<rect x="505.300" y="411.300" width="14.500" height="15.800" rx="1.500" fill="#2f333a"/>
<rect x="508" y="414" width="9.100" height="9.700" rx=".5" fill="#2798e0"/><path d="M510.300 416.500l4.500 4.600M514.800 416.500l-4.500 4.600" stroke="#d6ecfa" stroke-width=".7"/><circle cx="510.300" cy="416.500" r="1" fill="none" stroke="#d6ecfa" stroke-width=".45"/><circle cx="514.800" cy="416.500" r="1" fill="none" stroke="#d6ecfa" stroke-width=".45"/><circle cx="510.300" cy="421.100" r="1" fill="none" stroke="#d6ecfa" stroke-width=".45"/><circle cx="514.800" cy="421.100" r="1" fill="none" stroke="#d6ecfa" stroke-width=".45"/><circle cx="512.550" cy="418.800" r="1" fill="#eaf6fd"/>
<rect x="509.600" y="425.500" width="5.800" height="1" rx=".5" fill="#d9534f"/>
<g fill="#8b8e93"><rect x="334.500" y="425.700" width="2" height=".8" rx=".4"/><rect x="440.500" y="425.700" width="2" height=".8" rx=".4"/><rect x="458.300" y="425.700" width="2" height=".8" rx=".4"/><rect x="475.800" y="425.700" width="2" height=".8" rx=".4"/><rect x="493.300" y="425.700" width="2" height=".8" rx=".4"/></g>
<path d="M578.500 419.800l2.300-2.300 2.300 2.300" fill="none" stroke="#f0f0f0" stroke-width=".8"/>
<path d="M590.600 416.700h4.600v4.800" fill="none" stroke="#5d6167" stroke-width=".9"/>
<path d="M621.600 417.800a3.200 3.200 0 0 1 4.600 0l-2.300 2.800z" fill="#b5b8bc"/>
<path d="M630 418.200h1.400l1.800-1.500v4.600l-1.800-1.500H630z" fill="#d8dadd"/><path d="M634.300 417.300a2.400 2.400 0 0 1 0 3.400M635.500 416.400a3.700 3.700 0 0 1 0 5.200" fill="none" stroke="#d8dadd" stroke-width=".5"/>
<rect x="639.800" y="417" width="6" height="3.700" rx=".6" fill="#f2f2f2"/><rect x="646" y="418" width=".8" height="1.700" fill="#f2f2f2"/><path d="M641.500 416.400l-.8 2.100h1.400l-.8 2.300" stroke="#1c1f23" stroke-width=".5" fill="none"/>

</svg>
</div></body></html>
